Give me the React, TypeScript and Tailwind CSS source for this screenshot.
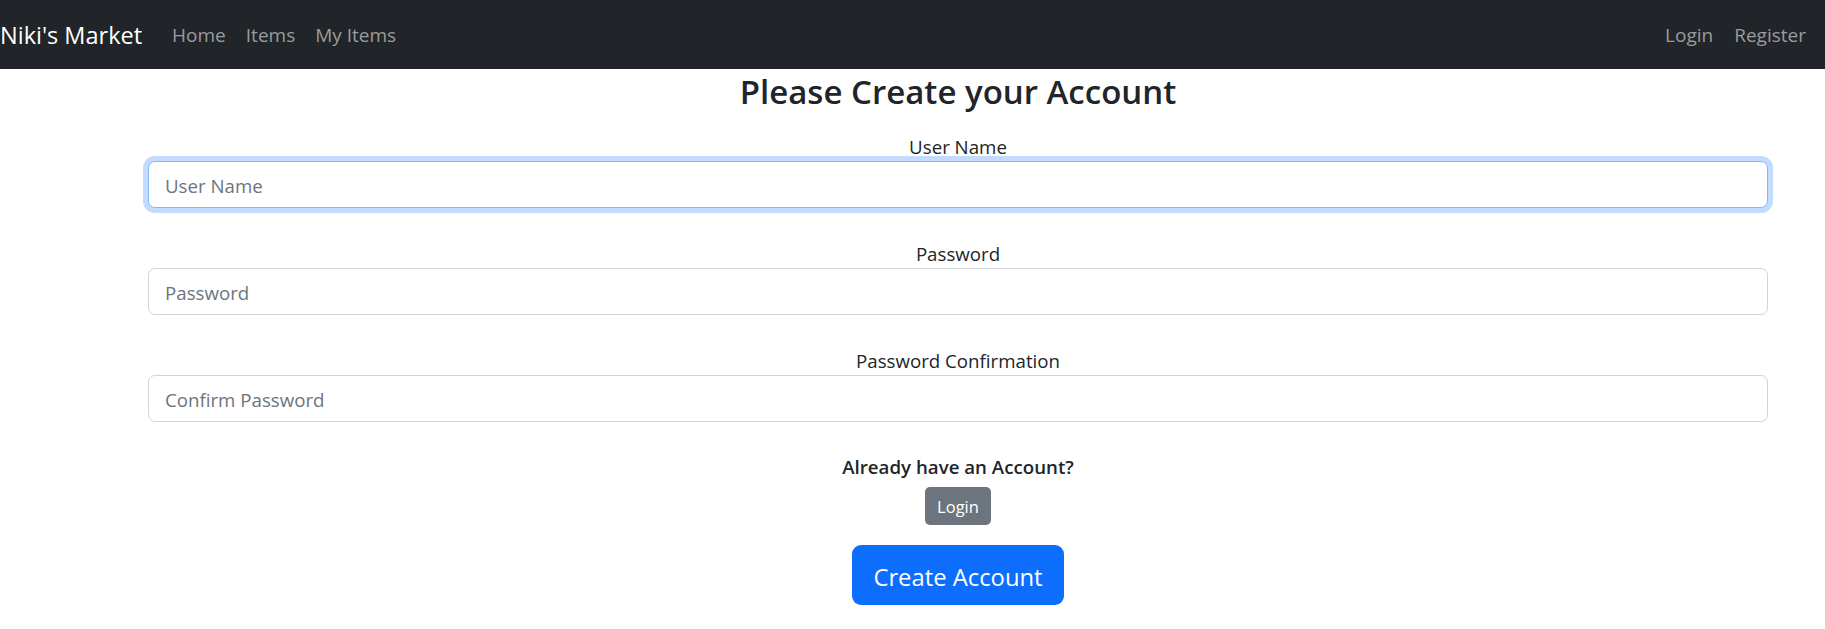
import React from 'react';

const font = { fontFamily: '"Open Sans", "Noto Sans", Arial, sans-serif' };

interface FieldProps {
  label: string;
  placeholder: string;
  type?: string;
  focused?: boolean;
  className?: string;
}

const Field: React.FC<FieldProps> = ({ label, placeholder, type = 'text', focused = false, className = '' }) => {
  return (
    <div className={`flex flex-col ${className}`}>
      <label className="h-[28px] leading-[28px] text-center text-[18.7px] text-[#212529]">{label}</label>
      <input
        type={type}
        placeholder={placeholder}
        className={`h-[47px] w-full rounded-[7px] border bg-white px-[16px] pt-[2px] text-[18.7px] text-[#212529] outline-none placeholder:text-[#6c757d] ${
          focused
            ? 'border-[#86b7fe] shadow-[0_0_0_5px_rgba(13,110,253,0.25)]'
            : 'border-[#ced4da]'
        }`}
      />
    </div>
  );
};

export default function App() {
  return (
    <div className="min-h-screen bg-white" style={font}>
      {/* Navbar */}
      <nav className="flex h-[69px] items-center justify-between bg-[#212529] pr-[19px] pt-[2px]">
        <div className="flex items-center">
          <a className="text-[23.5px] leading-none text-white">Niki's Market</a>
          <div className="ml-[30px] flex items-center gap-[20px] text-[19px] text-[#9a9b9d]">
            <a>Home</a>
            <a>Items</a>
            <a>My Items</a>
          </div>
        </div>
        <div className="flex items-center gap-[21px] text-[19px] text-[#9a9b9d]">
          <a>Login</a>
          <a>Register</a>
        </div>
      </nav>

      {/* Register form */}
      <div className="pl-[148px] pr-[57px]">
        <h1 className="mt-px h-[43px] text-center text-[33px] font-semibold leading-[43px] text-[#212529]">
          Please Create your Account
        </h1>
        <form className="mt-[20px] flex flex-col">
          <Field label="User Name" placeholder="User Name" focused />
          <Field label="Password" placeholder="Password" type="password" className="mt-[32px]" />
          <Field label="Password Confirmation" placeholder="Confirm Password" type="password" className="mt-[32px]" />

          <div className="mt-[30px] flex flex-col items-center">
            <p className="h-[28px] pt-px text-center text-[18.7px] font-semibold leading-[28px] text-[#212529]">
              Already have an Account?
            </p>
            <button
              type="button"
              className="mt-[7px] h-[38px] w-[66px] rounded-[5px] bg-[#6c757d] pt-[3px] text-[16.5px] text-white"
            >
              Login
            </button>
            <button
              type="button"
              className="mt-[20px] h-[60px] w-[212px] rounded-[9px] bg-[#0d6efd] pt-[5px] text-[23.8px] text-white"
            >
              Create Account
            </button>
          </div>
        </form>
      </div>
    </div>
  );
}
